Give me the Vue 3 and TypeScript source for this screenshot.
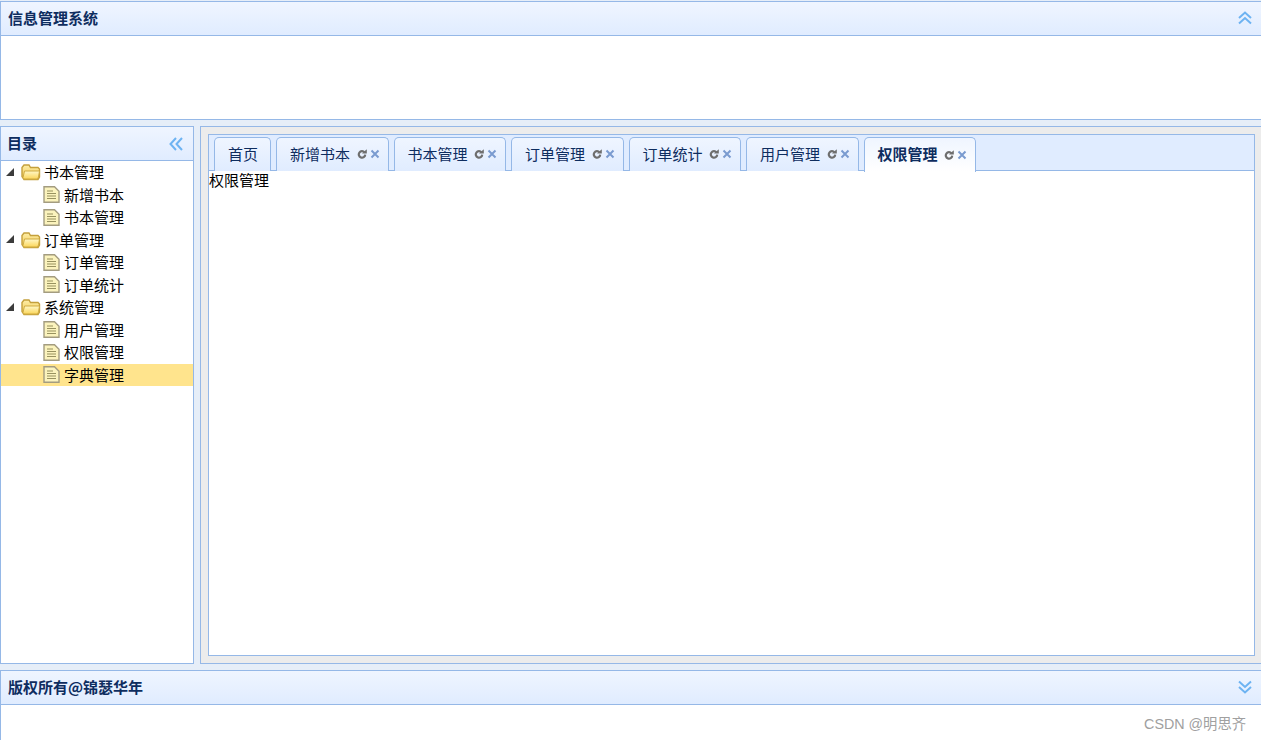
<script setup lang="ts">
interface Node { label: string; children: string[] }
const tree: Node[] = [
  { label: '书本管理', children: ['新增书本', '书本管理'] },
  { label: '订单管理', children: ['订单管理', '订单统计'] },
  { label: '系统管理', children: ['用户管理', '权限管理', '字典管理'] }
]
const selected = '字典管理'
const tabs = ['新增书本', '书本管理', '订单管理', '订单统计', '用户管理']
</script>

<template>
  <div class="page">
    <section class="panel top">
      <header class="head">
        <span>信息管理系统</span>
        <svg class="chev" width="16" height="14" viewBox="0 0 16 14" fill="none" stroke="#6db3f2" stroke-width="2"><path d="M2 7 8 1.500 14 7M2 12.500 8 7l6 5.500" /></svg>
      </header>
    </section>

    <div class="middle">
      <aside class="panel side">
        <header class="head side-head">
          <span>目录</span>
          <svg class="chev-left" width="14" height="16" viewBox="0 0 14 16" fill="none" stroke="#6db3f2" stroke-width="2"><path d="M7 2 1.500 8 7 14M13 2 7.500 8 13 14" /></svg>
        </header>
        <div class="tree">
          <svg class="defs" width="0" height="0">
            <defs>
              <linearGradient id="folderFront" x1="0" y1="0" x2="0" y2="1">
                <stop offset="0" stop-color="#fff8c8" />
                <stop offset="1" stop-color="#fbd65a" />
              </linearGradient>
              <linearGradient id="folderBack" x1="0" y1="0" x2="0" y2="1">
                <stop offset="0" stop-color="#fdeea8" />
                <stop offset="1" stop-color="#f2c64a" />
              </linearGradient>
            </defs>
          </svg>
          <template v-for="group in tree" :key="group.label">
            <div class="row">
              <svg class="tri" width="8" height="8" viewBox="0 0 8 8"><path d="M0 8 8 0v8z" fill="#3c3c3c" /></svg>
              <svg class="folder" width="20" height="18" viewBox="0 0 20 18">
                <path d="M1 13.500V4.500L3 2h5l1.500 2.500h7.500l1.500 1.500v8L17 16.500H3z" fill="url(#folderBack)" stroke="#c4a03c" stroke-width="1.400" />
                <path d="M2 14.500 3.500 8h15L17.500 14l-1 2H3z" fill="url(#folderFront)" stroke="#cfab42" />
              </svg>
              <span>{{ group.label }}</span>
            </div>
            <div v-for="child in group.children" :key="child" class="row leaf" :class="{ on: child === selected }">
              <svg class="doc" width="17" height="17" viewBox="0 0 17 17">
                <path d="M1 .7h10.500l4.500 4.500v11H1z" fill="#fbf3bd" stroke="#a39c80" stroke-width="1.400" />
                <path d="M4 5h6M4 7.500h9M4 10h9M4 12.500h9" stroke="#98925f" stroke-width="1.100" />
              </svg>
              <span>{{ child }}</span>
            </div>
          </template>
        </div>
      </aside>

      <main class="work">
        <div class="tabs-box">
          <nav class="strip">
            <div class="tab"><span>首页</span></div>
            <div v-for="t in tabs" :key="t" class="tab closable">
              <span>{{ t }}</span>
              <svg class="refresh" width="10" height="10" viewBox="0 0 10 10" fill="none"><path d="M7.500 3.400A3.200 3.200 0 1 0 8.200 5.600" stroke="#6e6e6e" stroke-width="2.200" /><path d="M5 4.500h4.800V.2z" fill="#6e6e6e" /></svg>
              <svg class="close" width="10" height="10" viewBox="0 0 10 10" fill="none" stroke="#7a9bd0" stroke-width="2"><path d="M1.500 1.500l7 7M8.500 1.500l-7 7" /></svg>
            </div>
            <div class="tab closable active">
              <span>权限管理</span>
              <svg class="refresh" width="10" height="10" viewBox="0 0 10 10" fill="none"><path d="M7.500 3.400A3.200 3.200 0 1 0 8.200 5.600" stroke="#6e6e6e" stroke-width="2.200" /><path d="M5 4.500h4.800V.2z" fill="#6e6e6e" /></svg>
              <svg class="close" width="10" height="10" viewBox="0 0 10 10" fill="none" stroke="#7a9bd0" stroke-width="2"><path d="M1.500 1.500l7 7M8.500 1.500l-7 7" /></svg>
            </div>
          </nav>
          <div class="tab-body">权限管理</div>
        </div>
      </main>
    </div>

    <section class="panel bottom">
      <header class="head">
        <span>版权所有@锦瑟华年</span>
        <svg class="chev" width="16" height="14" viewBox="0 0 16 14" fill="none" stroke="#6db3f2" stroke-width="2"><path d="M2 1.500 8 7l6-5.500M2 7l6 5.500L14 7" /></svg>
      </header>
      <div class="mark">CSDN @明思齐</div>
    </section>
  </div>
</template>

<style>
html, body { margin: 0; background: #e6eef8; }
</style>

<style scoped>
.page {
  width: 1261px;
  height: 740px;
  box-sizing: border-box;
  padding-top: 1px;
  display: flex;
  flex-direction: column;
  gap: 6px;
  overflow: hidden;
  font-family: "Noto Sans CJK SC", "Liberation Sans", sans-serif;
  font-size: 15px;
  background: #e6eef8;
}
.panel {
  box-sizing: border-box;
  border: 1px solid #95b8e7;
  background: #fff;
}
.top { height: 119px; flex: none; border-right: 0; }
.bottom { height: 70px; flex: none; position: relative; border-right: 0; border-bottom: 0; }
.head {
  height: 34px;
  box-sizing: border-box;
  border-bottom: 1px solid #95b8e7;
  background: linear-gradient(#eff5ff, #e0ecff);
  display: flex;
  align-items: center;
  justify-content: space-between;
  padding: 0 8px 0 7px;
  color: #0e2d5f;
  font-weight: 700;
  line-height: 20px;
}
.head span { margin-top: -1px; }
.chev { margin-top: -1px; }
.middle { flex: none; height: 538px; display: flex; gap: 6px; }
.side { width: 194px; flex: none; }
.side-head { padding: 0 10px 0 6px; }
.tree { padding: 0; }
.defs { position: absolute; }
.row {
  height: 22.5px;
  display: flex;
  align-items: center;
  padding-left: 5px;
  line-height: 20px;
  color: #000;
}
.tri { margin-right: 7px; margin-top: -1px; flex: none; }
.folder { margin-right: 3px; flex: none; }
.leaf { padding-left: 42px; }
.doc { margin-right: 4px; flex: none; }
.on { background: #ffe48d; }
.work {
  flex: 1;
  min-width: 0;
  box-sizing: border-box;
  border: 1px solid #95b8e7;
  border-right: 0;
  background: #ececec;
  padding: 7px 6px 7px 7px;
  display: flex;
}
.tabs-box {
  flex: 1;
  min-width: 0;
  box-sizing: border-box;
  border: 1px solid #95b8e7;
  background: #fff;
  display: flex;
  flex-direction: column;
}
.strip {
  height: 36px;
  box-sizing: border-box;
  flex: none;
  border-bottom: 1px solid #95b8e7;
  background: #e0ecff;
  display: flex;
  gap: 5px;
  padding: 2px 0 0 5px;
}
.tab {
  height: 34px;
  box-sizing: border-box;
  width: 57px;
  border: 1px solid #95b8e7;
  border-bottom: 0;
  border-radius: 5px 5px 0 0;
  background: linear-gradient(#eff5ff, #e0ecff);
  color: #0e2d5f;
  display: flex;
  align-items: center;
  padding-left: 13px;
  line-height: 20px;
}
.tab span { margin-top: -2px; }
.tab svg { margin-top: -1px; }
.closable { width: 112.5px; }
.refresh { margin-left: 6.5px; flex: none; }
.close { margin-left: 3px; flex: none; }
.active {
  height: 35px;
  margin-bottom: -1px;
  background: linear-gradient(#eff5ff, #fff);
  font-weight: 700;
}
.active .refresh { margin-left: 6px; }
.tab-body {
  flex: 1;
  line-height: 18px;
  color: #000;
}
.mark {
  position: absolute;
  right: 15px;
  bottom: 7px;
  font-family: "Liberation Sans", "Noto Sans CJK SC", sans-serif;
  font-size: 14.3px;
  line-height: 18px;
  color: #a0a0a0;
}
</style>
